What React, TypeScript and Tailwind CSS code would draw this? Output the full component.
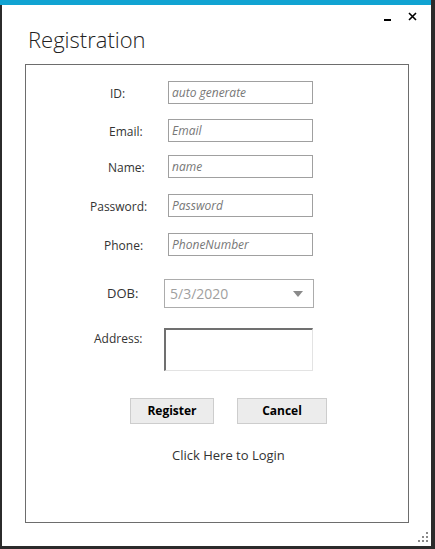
import React from 'react';

interface Field {
  label: string;
  placeholder: string;
  labelPad: string;
  gap: string;
}

const fields: Field[] = [
  { label: 'ID:', placeholder: 'auto generate', labelPad: 'pl-[84px]', gap: 'mt-[16px]' },
  { label: 'Email:', placeholder: 'Email', labelPad: 'pl-[83px]', gap: 'mt-[15px]' },
  { label: 'Name:', placeholder: 'name', labelPad: 'pl-[82px]', gap: 'mt-[13px]' },
  { label: 'Password:', placeholder: 'Password', labelPad: 'pl-[64px]', gap: 'mt-[16px]' },
  { label: 'Phone:', placeholder: 'PhoneNumber', labelPad: 'pl-[78px]', gap: 'mt-[16px]' },
];

const ResizeGrip: React.FC = () => (
  <svg width="10" height="10" viewBox="0 0 10 10" fill="#8a8a8a">
    <rect x="8" y="0" width="2" height="2" />
    <rect x="4" y="4" width="2" height="2" />
    <rect x="8" y="4" width="2" height="2" />
    <rect x="0" y="8" width="2" height="2" />
    <rect x="4" y="8" width="2" height="2" />
    <rect x="8" y="8" width="2" height="2" />
  </svg>
);

const App: React.FC = () => {
  return (
    <div
      className="w-[435px] h-[549px] bg-[#2b2b2b] flex flex-col pr-[4px] pb-[3px]"
      style={{ fontFamily: '"Open Sans", "Noto Sans", sans-serif' }}
    >
      {/* accent bar */}
      <div className="h-[5px] bg-[#11a3d2] shrink-0" />

      <div className="flex-1 pl-[2px] flex">
        <div className="flex-1 bg-white flex flex-col">
          {/* window buttons */}
          <div className="h-[17px] flex justify-end items-start">
            <div className="w-[7px] h-[2px] bg-black mt-[14px] mr-[17px]" />
            <svg width="9" height="9" viewBox="0 0 9 9" className="mt-[7px] mr-[14px]">
              <path d="M1 1L8 8M8 1L1 8" stroke="#000" strokeWidth="1.6" />
            </svg>
          </div>

          <h1 className="ml-[26px] mt-[2px] text-[22px] font-light leading-[30px] text-[#222]">
            Registration
          </h1>

          {/* form panel */}
          <div className="ml-[23px] mt-[10px] w-[384px] h-[459px] border border-[#6d6d6d] flex flex-col text-[12px] text-[#333]">
            {fields.map((f) => (
              <div key={f.label} className={`flex items-center h-[23px] ${f.gap}`}>
                <div className={`w-[142px] pt-[2px] ${f.labelPad}`}>{f.label}</div>
                <div className="w-[145px] h-[23px] border border-[#a0a0a0] px-[3px] flex items-center italic text-[#777]">
                  {f.placeholder}
                </div>
              </div>
            ))}

            <div className="flex items-center h-[29px] mt-[23px]">
              <div className="w-[138px] pl-[81px] text-[13px]">DOB:</div>
              <div className="w-[150px] h-[29px] border border-[#acacac] pl-[5px] pr-[10px] flex items-center justify-between text-[14px] text-[#a0a0a0]">
                <span>5/3/2020</span>
                <svg width="10" height="6" viewBox="0 0 10 6">
                  <path d="M0 0H10L5 6Z" fill="#8a8a8a" />
                </svg>
              </div>
            </div>

            <div className="flex items-start h-[43px] mt-[20px]">
              <div className="w-[138px] pl-[68px] pt-[2px]">Address:</div>
              <div className="w-[149px] h-[43px] border-t-2 border-l-2 border-r border-b border-t-[#707070] border-l-[#707070] border-r-[#e3e3e3] border-b-[#e3e3e3]" />
            </div>

            <div className="flex mt-[27px] ml-[104px] gap-[23px]">
              <button className="w-[84px] h-[26px] bg-[#ececec] border border-[#cdcdcd] text-[12px] font-bold text-black">
                Register
              </button>
              <button className="w-[90px] h-[26px] bg-[#ececec] border border-[#cdcdcd] text-[12px] font-bold text-black">
                Cancel
              </button>
            </div>

            <div className="ml-[146px] mt-[22px] text-[13px] text-[#333]">Click Here to Login</div>
          </div>

          <div className="flex justify-end mt-[9px] mr-[3px]">
            <ResizeGrip />
          </div>
        </div>
      </div>
    </div>
  );
};

export default App;
